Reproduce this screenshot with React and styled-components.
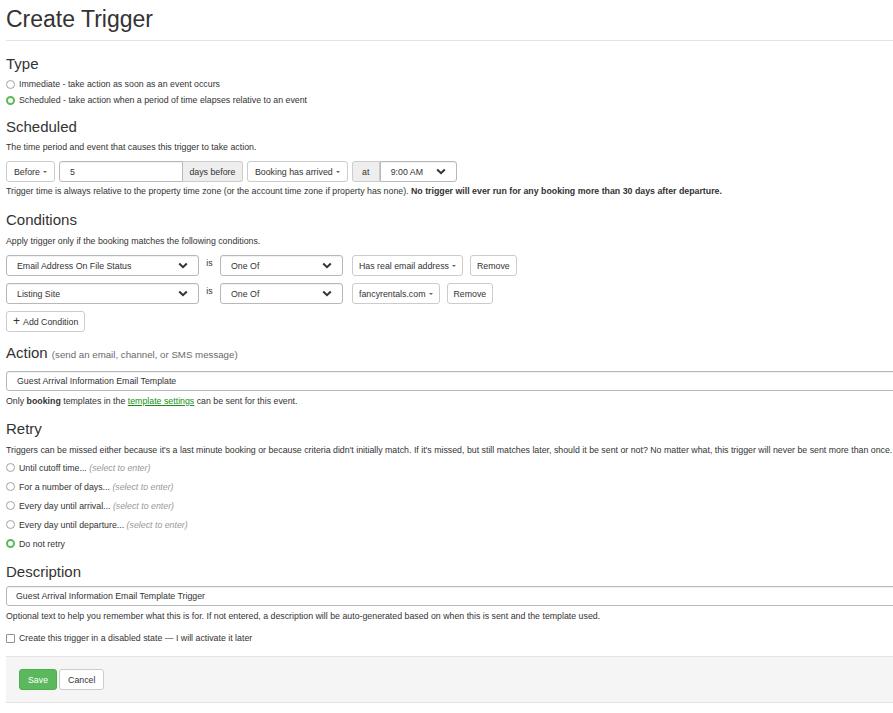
import React from 'react'
import styled, { createGlobalStyle } from 'styled-components'

const GlobalStyle = createGlobalStyle`
  html, body {
    margin: 0;
    padding: 0;
    overflow: hidden;
    background: #fff;
  }
  body {
    font-family: "Liberation Sans", Arial, sans-serif;
    font-size: 8.8px;
    color: #333;
  }
  * { box-sizing: border-box; }
`

const colors = {
  text: '#333',
  border: '#ccc',
  addon: '#eee',
  green: '#5cb85c',
  muted: '#999',
}

const Page = styled.div`
  width: 1000px;
  padding: 0 0 0 6px;
`

const Title = styled.h1`
  margin: 4px 0 0;
  padding-bottom: 6px;
  border-bottom: 1px solid #e4e4e4;
  font-size: 23px;
  line-height: 30px;
  font-weight: 400;
`

const Heading = styled.h3`
  margin: ${p => p.top || 11}px 0 0;
  font-size: 15px;
  line-height: 17px;
  font-weight: 400;
`

const SubHeading = styled.small`
  font-size: 9.7px;
  color: #6a6a6a;
`

const Help = styled.p`
  margin: ${p => p.top || 0}px 0 0;
  line-height: 14px;
`

const RadioList = styled.div`
  margin-top: ${p => p.top || 2}px;
  display: flex;
  flex-direction: column;
`

const OptionRow = styled.label`
  display: flex;
  align-items: center;
  gap: 4px;
  height: ${p => p.h || 16}px;
`

const RadioDot = styled.span`
  width: 9px;
  height: 9px;
  border-radius: 50%;
  flex: none;
  border: ${p => p.checked ? `2.5px solid ${colors.green}` : '1px solid #a3a3a3'};
  background: #fff;
`

const CheckBox = styled.span`
  width: 9px;
  height: 9px;
  flex: none;
  border: 1px solid #8f8f8f;
  border-radius: 1px;
  background: #fff;
`

const Hint = styled.span`
  color: ${colors.muted};
  font-style: italic;
`

const Row = styled.div`
  display: flex;
  align-items: center;
  gap: ${p => p.gap ?? 4}px;
  margin-top: ${p => p.top || 0}px;
  height: 21px;
`

const Button = styled.button`
  height: 21px;
  padding: 0 ${p => p.pad || 8}px;
  margin-left: ${p => p.ml || 0}px;
  border: 1px solid ${colors.border};
  border-radius: 3px;
  background: #fff;
  color: ${colors.text};
  font: inherit;
  display: inline-flex;
  align-items: center;
  gap: 3px;
  white-space: nowrap;
  ${p => p.primary && `
    background: ${colors.green};
    border-color: #4cae4c;
    color: #fff;
  `}
`

const Caret = styled.span`
  width: 0;
  height: 0;
  border-top: 2.5px solid #666;
  border-left: 2.5px solid transparent;
  border-right: 2.5px solid transparent;
`

const Group = styled.div`
  display: flex;
  height: 21px;
`

const Field = styled.div`
  width: ${p => p.w ? `${p.w}px` : '100%'};
  height: ${p => p.h || 21}px;
  margin-top: ${p => p.top || 0}px;
  border: 1px solid #b8b8b8;
  border-radius: ${p => p.radius || '3px'};
  box-shadow: inset 0 1px 1px rgba(0,0,0,.06);
  padding: 0 ${p => p.pad || 10}px;
  display: flex;
  align-items: center;
  justify-content: space-between;
  background: #fff;
  white-space: nowrap;
`

const Addon = styled.div`
  width: ${p => p.w}px;
  border: 1px solid ${colors.border};
  border-left-width: ${p => p.noLeft ? 0 : 1}px;
  border-radius: ${p => p.radius || '0'};
  background: ${colors.addon};
  display: flex;
  align-items: center;
  justify-content: center;
`

const Is = styled.span`
  width: 21px;
  text-align: center;
  align-self: flex-start;
  line-height: 16px;
`

const Link = styled.a`
  color: #159015;
  text-decoration: underline;
`

const Plus = styled.span`
  font-size: 12px;
  line-height: 1;
  margin-top: -1px;
`

const Footer = styled.div`
  margin-top: 10px;
  background: #f5f5f5;
  border-top: 1px solid #e3e3e3;
  border-bottom: 1px solid #e3e3e3;
  padding: 12px 13px 12px;
  display: flex;
  gap: 2px;
`

const Chevron = () => (
  <svg width="10" height="7" viewBox="0 0 10 7">
    <polyline points="1.2,1.5 5,5.2 8.8,1.5" fill="none" stroke="#333" strokeWidth="2" />
  </svg>
)

const Select = ({ w, children }) => (
  <Field w={w} pad={10}>
    <span>{children}</span>
    <Chevron />
  </Field>
)

const Radio = ({ checked, h, children }) => (
  <OptionRow h={h}>
    <RadioDot checked={checked} />
    <span>{children}</span>
  </OptionRow>
)

const conditions = [
  { field: 'Email Address On File Status', value: 'Has real email address' },
  { field: 'Listing Site', value: 'fancyrentals.com' },
]

const retries = [
  'Until cutoff time',
  'For a number of days',
  'Every day until arrival',
  'Every day until departure',
]

const App = () => (
  <Page>
    <GlobalStyle />
    <Title>Create Trigger</Title>

    <Heading top={14}>Type</Heading>
    <RadioList top={4}>
      <Radio>Immediate - take action as soon as an event occurs</Radio>
      <Radio checked>Scheduled - take action when a period of time elapses relative to an event</Radio>
    </RadioList>

    <Heading top={10}>Scheduled</Heading>
    <Help top={5}>The time period and event that causes this trigger to take action.</Help>
    <Row top={7}>
      <Button pad={7}>Before <Caret /></Button>
      <Group>
        <Field w={124} radius="3px 0 0 3px">5</Field>
        <Addon w={60} noLeft radius="0 3px 3px 0">days before</Addon>
      </Group>
      <Button pad={7}>Booking has arrived <Caret /></Button>
      <Group>
        <Addon w={28} radius="3px 0 0 3px">at</Addon>
        <Field w={77} radius="0 3px 3px 0" pad={10}>
          <span>9:00 AM</span>
          <Chevron />
        </Field>
      </Group>
    </Row>
    <Help top={2}>
      Trigger time is always relative to the property time zone (or the account time zone if property has none).{' '}
      <b>No trigger will ever run for any booking more than 30 days after departure.</b>
    </Help>

    <Heading top={13}>Conditions</Heading>
    <Help top={6}>Apply trigger only if the booking matches the following conditions.</Help>
    {conditions.map(c => (
      <Row key={c.field} top={7} gap={0}>
        <Select w={193}>{c.field}</Select>
        <Is>is</Is>
        <Select w={123}>One Of</Select>
        <Button ml={9} pad={6}>{c.value} <Caret /></Button>
        <Button ml={7} pad={6}>Remove</Button>
      </Row>
    ))}
    <Row top={7}>
      <Button pad={6}><Plus>+</Plus>Add Condition</Button>
    </Row>

    <Heading top={12}>Action <SubHeading>(send an email, channel, or SMS message)</SubHeading></Heading>
    <Field h={20} top={8}>Guest Arrival Information Email Template</Field>
    <Help top={3}>
      Only <b>booking</b> templates in the <Link>template settings</Link> can be sent for this event.
    </Help>

    <Heading top={12}>Retry</Heading>
    <Help top={6}>
      Triggers can be missed either because it's a last minute booking or because criteria didn't initially match. If it's missed, but still matches later, should it be sent or not? No matter what, this trigger will never be sent more than once.
    </Help>
    <RadioList top={1}>
      {retries.map(r => (
        <Radio key={r} h={19}>{r}... <Hint>(select to enter)</Hint></Radio>
      ))}
      <Radio h={19} checked>Do not retry</Radio>
    </RadioList>

    <Heading top={10}>Description</Heading>
    <Field h={20} pad={9} top={6}>Guest Arrival Information Email Template Trigger</Field>
    <Help top={3}>
      Optional text to help you remember what this is for. If not entered, a description will be auto-generated based on when this is sent and the template used.
    </Help>
    <OptionRow style={{ marginTop: 7 }}>
      <CheckBox />
      <span>Create this trigger in a disabled state — I will activate it later</span>
    </OptionRow>

    <Footer>
      <Button primary pad={8}>Save</Button>
      <Button pad={8}>Cancel</Button>
    </Footer>
  </Page>
)

export default App
